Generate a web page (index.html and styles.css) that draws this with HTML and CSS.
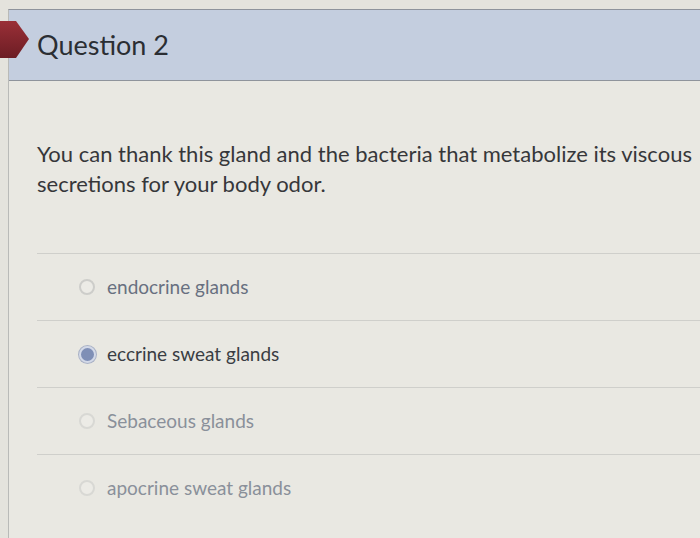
FILE: index.html
```html
<!DOCTYPE html>
<html lang="en">
<head>
<meta charset="utf-8">
<title>Question 2</title>
<link rel="stylesheet" href="styles.css">
</head>
<body>
<div class="page">
  <svg class="flag" width="30" height="38" viewBox="0 0 30 38" aria-hidden="true">
    <defs>
      <linearGradient id="fg" x1="0" y1="0" x2="0" y2="1">
        <stop offset="0" stop-color="#9a2f37"/>
        <stop offset="1" stop-color="#6c1d24"/>
      </linearGradient>
    </defs>
    <polygon points="0,0 16,0 29,18 16,37 0,37" fill="url(#fg)"/>
  </svg>
  <section class="question">
    <header class="q-header">
      <h2 class="q-title">Question 2</h2>
    </header>
    <div class="q-body">
      <p class="q-text">You can thank this gland and the bacteria that metabolize its viscous secretions for your body odor.</p>
      <ul class="answers">
        <li class="answer"><span class="radio"></span><span class="label">endocrine glands</span></li>
        <li class="answer selected"><span class="radio"></span><span class="label">eccrine sweat glands</span></li>
        <li class="answer faded"><span class="radio"></span><span class="label">Sebaceous glands</span></li>
        <li class="answer faded"><span class="radio"></span><span class="label">apocrine sweat glands</span></li>
      </ul>
    </div>
  </section>
</div>
</body>
</html>
```
FILE: styles.css
```css
html, body {
  margin: 0;
  padding: 0;
  overflow: hidden;
  background: #e4e3dd;
  font-family: Lato, "Open Sans", sans-serif;
}
.page {
  position: relative;
  width: 700px;
  height: 538px;
  padding-top: 9px;
  padding-left: 8px;
  box-sizing: border-box;
  display: flex;
  flex-direction: column;
}
.flag {
  position: absolute;
  left: 0;
  top: 21px;
}
.question {
  flex: 1;
  background: #e9e8e2;
  border-left: 1px solid #b9bab8;
  border-top: 1px solid #8e939c;
}
.q-header {
  height: 70px;
  background: #c4cedf;
  border-bottom: 1px solid #8f949c;
  display: flex;
  align-items: center;
  padding-left: 28px;
}
.q-title {
  margin: 0;
  font-size: 27px;
  font-weight: 400;
  color: #2b2e33;
  padding-bottom: 2px;
}
.q-body {
  padding: 58px 0 0 28px;
}
.q-text {
  margin: 0;
  font-size: 22px;
  line-height: 30px;
  color: #36373a;
}
.answers {
  list-style: none;
  margin: 54px 0 0;
  padding: 0;
}
.answer {
  height: 67px;
  border-top: 1px solid #cfcfcb;
  display: flex;
  align-items: center;
  padding-left: 42px;
  box-sizing: border-box;
}
.radio {
  width: 16px;
  height: 16px;
  border-radius: 50%;
  border: 2px solid #cdcdca;
  background: #ecebe6;
  margin-right: 12px;
  box-sizing: border-box;
  flex: none;
}
.label {
  font-size: 19px;
  color: #687080;
  padding-bottom: 2px;
}
.selected .radio {
  width: 17px;
  height: 17px;
  margin-left: 0;
  margin-right: 11px;
  border: 2px solid #d3d9e8;
  background: #7f8fb6;
  box-shadow: 0 0 0 1px #aab2c6;
}
.selected .label {
  color: #3a3d43;
}
.faded .label {
  color: #8a909a;
}
.faded .radio {
  border-color: #d8d8d4;
}
```
